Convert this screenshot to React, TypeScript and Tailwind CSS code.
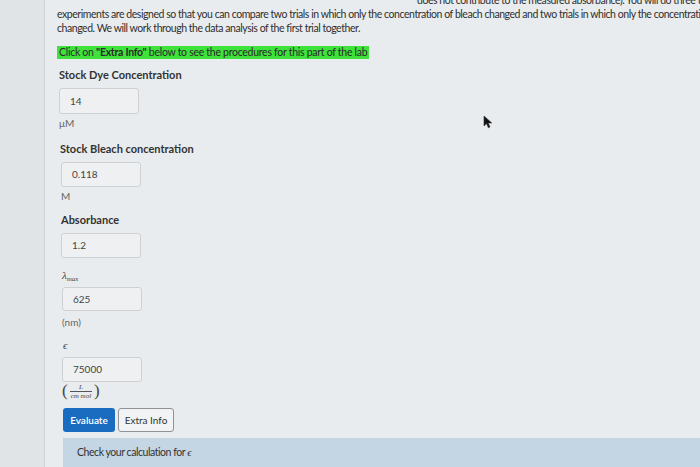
import React from "react";

const body = "font-['Lato',sans-serif] text-[10.5px] tracking-[-0.45px]";
const label = "font-['Lato',sans-serif] font-bold text-[11px] leading-[14px] text-[#333]";

function Field({ value, className }: { value: string; className?: string }) {
  return (
    <div
      className={`w-[80px] rounded-[3px] border border-[#cdd1d4] bg-[#eef0f2] pl-[10px] flex items-center text-[10px] text-[#444] font-['Lato',sans-serif] ${className ?? ""}`}
    >
      {value}
    </div>
  );
}

function Cursor() {
  return (
    <svg className="absolute left-[483px] top-[115px]" width="11" height="14" viewBox="0 0 11 14">
      <path d="M1 1 L1 11 L3.5 8.6 L5.4 12.8 L7 12 L5.2 8 L8.8 8 Z" fill="#111" stroke="#333" strokeWidth="0.6" />
    </svg>
  );
}

export default function App() {
  return (
    <div className="relative flex h-[467px] w-[700px] overflow-hidden bg-[#e9ecee]">
      <div className="w-[45px] shrink-0 border-r border-[#cfd3d6] bg-[#e1e4e6]" />
      <div className="flex-1 pl-[12px]">
        <div className={`${body} mt-[-7px] leading-[14px] text-[#2f2f2f] whitespace-nowrap`}>
          <div className="pl-[360px]">
            does not contribute to the measured absorbance). You will do three trials and these
          </div>
          <div>
            experiments are designed so that you can compare two trials in which only the concentration of bleach changed and two trials in which only the concentration of dye
          </div>
          <div>changed. We will work through the data analysis of the first trial together.</div>
        </div>

        <div className="mt-[11px] flex">
          <div className="font-['Lato',sans-serif] text-[10.5px] tracking-[-0.28px] bg-[#3fe23b] px-[2px] leading-[13px] text-[#2a2a2a] whitespace-nowrap">
            Click on <span className="font-bold">"Extra Info"</span> below to see the procedures for this part of the lab
          </div>
        </div>

        <div className="flex flex-col pl-[2px]">
          <div className={`${label} mt-[9px]`}>Stock Dye Concentration</div>
          <Field value="14" className="mt-[6px] h-[26px]" />
          <div className="mt-[2px] text-[10px] leading-[14px] text-[#666] font-['Lato',sans-serif]">μM</div>

          <div className={`${label} mt-[12px] ml-[1px]`}>Stock Bleach concentration</div>
          <Field value="0.118" className="mt-[6px] h-[25px] ml-[2px]" />
          <div className="mt-[2px] ml-[2px] text-[10px] leading-[14px] text-[#666] font-['Lato',sans-serif]">M</div>

          <div className={`${label} mt-[10px] ml-[2px]`}>Absorbance</div>
          <Field value="1.2" className="mt-[6px] h-[25px] ml-[2px]" />

          <div className="mt-[10px] ml-[3px] h-[14px] leading-[14px] text-[#444] font-['Liberation_Serif',serif] italic text-[11px]">
            λ<sub className="text-[7px]">max</sub>
          </div>
          <Field value="625" className="mt-[5px] h-[24px] ml-[3px]" />
          <div className="mt-[4px] ml-[3px] text-[10px] leading-[14px] text-[#666] font-['Lato',sans-serif]">(nm)</div>

          <div className="mt-[9px] ml-[4px] text-[11px] leading-[14px] text-[#444] font-['Liberation_Serif',serif] italic">ϵ</div>
          <Field value="75000" className="mt-[5px] h-[25px] ml-[3px]" />
          <div className="ml-[3px] flex h-[18px] items-center text-[#444] font-['Liberation_Serif',serif] italic">
            <span className="not-italic text-[17px] leading-[18px] font-light">(</span>
            <span className="mx-[2px] flex flex-col items-center text-[7px] leading-[8px]">
              <span className="px-[1px]">L</span>
              <span className="border-t border-[#555] px-[1px]">cm mol</span>
            </span>
            <span className="not-italic text-[17px] leading-[18px] font-light">)</span>
          </div>

          <div className="mt-[8px] ml-[4px] flex gap-[3px] font-['Lato',sans-serif] text-[10px]">
            <div className="flex h-[24px] w-[52px] items-center justify-center rounded-[3px] bg-[#1a6cc0] font-semibold text-white">
              Evaluate
            </div>
            <div className="flex h-[24px] w-[56px] items-center justify-center rounded-[3px] border border-[#8d9296] bg-[#f1f3f4] text-[#333]">
              Extra Info
            </div>
          </div>

          <div className={`${body} mt-[6px] ml-[4px] h-[40px] bg-[#c4d6e3] pl-[14px] pt-[7px] leading-[14px] text-[#333]`}>
            Check your calculation for <span className="font-['Liberation_Serif',serif] italic tracking-normal">ϵ</span>
          </div>
        </div>
      </div>
      <Cursor />
    </div>
  );
}
